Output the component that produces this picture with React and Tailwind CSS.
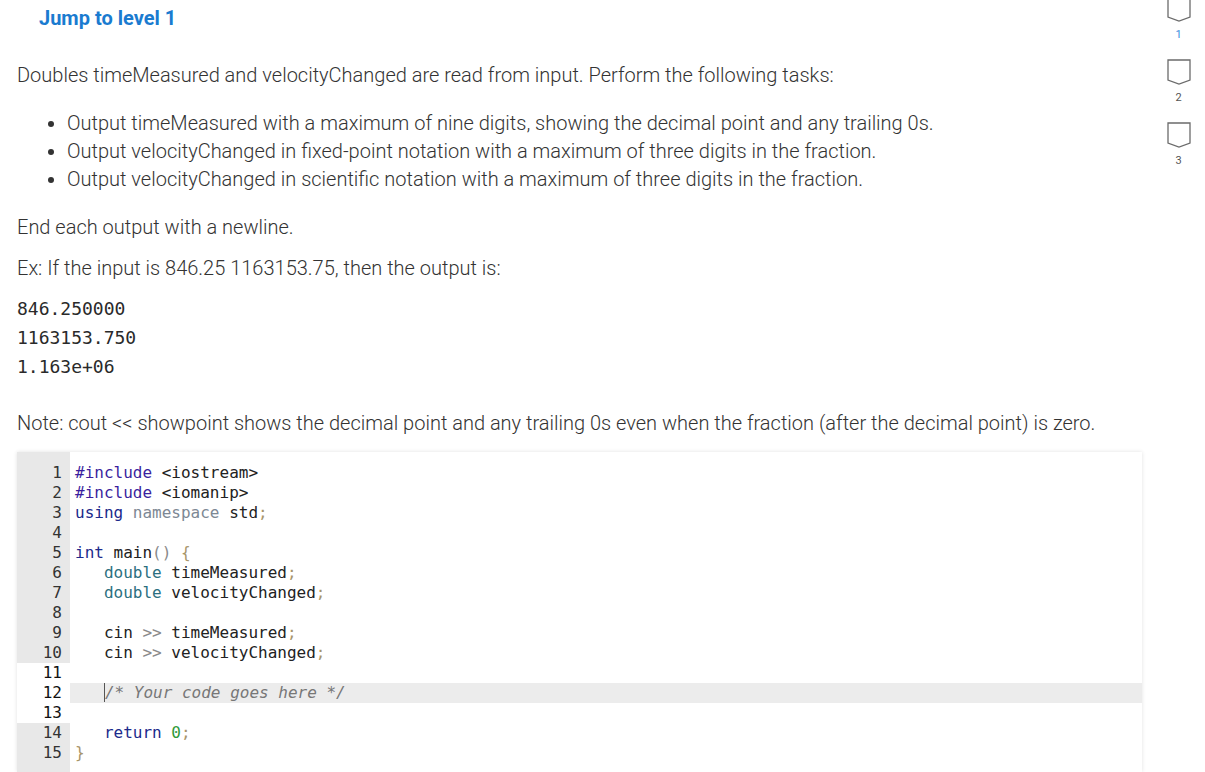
import React from 'react';

const mono = { fontFamily: '"DejaVu Sans Mono", "Liberation Mono", monospace' };

const C = {
  pre: 'text-[#3b1f9e]',
  kw: 'text-[#1c2a8c]',
  ns: 'text-[#7d8894]',
  type: 'text-[#2c6f80]',
  punc: 'text-[#a8956a]',
  op: 'text-[#8a8a8a]',
  num: 'text-[#2f9a3a]',
  txt: 'text-[#222]',
};

const codeLines = [
  [['#include', C.pre], [' <iostream>', C.txt]],
  [['#include', C.pre], [' <iomanip>', C.txt]],
  [['using', C.kw], [' namespace', C.ns], [' std', C.txt], [';', C.punc]],
  [],
  [['int', C.kw], [' main', C.txt], ['()', C.op], [' {', C.punc]],
  [['   double', C.type], [' timeMeasured', C.txt], [';', C.punc]],
  [['   double', C.type], [' velocityChanged', C.txt], [';', C.punc]],
  [],
  [['   cin', C.txt], [' >>', C.op], [' timeMeasured', C.txt], [';', C.punc]],
  [['   cin', C.txt], [' >>', C.op], [' velocityChanged', C.txt], [';', C.punc]],
  [],
  'comment',
  [],
  [['   return', C.kw], [' 0', C.num], [';', C.punc]],
  [['}', C.punc]],
];

const LevelIcon = ({ n, first }) => (
  <div className={`flex flex-col items-center ${first ? 'mt-[-4px]' : ''}`}>
    <svg width="26" height="26" viewBox="0 0 26 26">
      <path d="M2 1 L24 1 L24 21 L13 25 L2 21 Z" fill="white" stroke="#6b6b6b" strokeWidth="1.3" />
    </svg>
    <span className={`mt-[6px] text-[11px] leading-[14px] ${first ? 'text-[#3b8ee0]' : 'text-[#555]'}`}>{n}</span>
    <div className="h-[17px]" />
  </div>
);

export default function App() {
  return (
    <div className="w-[1205px] h-[772px] overflow-hidden bg-white flex" style={{ fontFamily: 'Roboto, "Liberation Sans", sans-serif' }}>
      <div className="w-[1142px] pl-[17px] flex flex-col">
        <h1 className="pl-[22px] pt-[6px] text-[20px] leading-[24px] font-bold text-[#1a7bd0]">Jump to level 1</h1>

        <div className="text-[20px] leading-[28px] font-light text-[#333]">
          <p className="mt-[31px]">Doubles timeMeasured and velocityChanged are read from input. Perform the following tasks:</p>
          <ul className="mt-[20px] pl-[50px] list-disc">
            <li>Output timeMeasured with a maximum of nine digits, showing the decimal point and any trailing 0s.</li>
            <li>Output velocityChanged in fixed-point notation with a maximum of three digits in the fraction.</li>
            <li>Output velocityChanged in scientific notation with a maximum of three digits in the fraction.</li>
          </ul>
          <p className="mt-[20px]">End each output with a newline.</p>
          <p className="mt-[13px]">Ex: If the input is 846.25 1163153.75, then the output is:</p>
          <div className="mt-[12px] text-[18px] leading-[29px] font-normal text-[#2a2a2a]" style={mono}>
            <div>846.250000</div>
            <div>1163153.750</div>
            <div>1.163e+06</div>
          </div>
          <p className="mt-[28px]">Note: cout &lt;&lt; showpoint shows the decimal point and any trailing 0s even when the fraction (after the decimal point) is zero.</p>
        </div>

        <div className="mt-[15px] flex-1 flex bg-white shadow-[0_0_4px_rgba(0,0,0,0.12)]" style={mono}>
          <div className="w-[53px] flex flex-col text-[16px] leading-[20px] text-[#333]">
            <div className="h-[11px] bg-[#e8e8e8]" />
            {codeLines.map((_, i) => (
              <div key={i} className={`pr-[8px] text-right ${i >= 10 && i <= 12 ? 'bg-white text-[#111]' : 'bg-[#e8e8e8]'}`}>{i + 1}</div>
            ))}
            <div className="flex-1 bg-[#e8e8e8]" />
          </div>
          <div className="flex-1 pt-[11px] text-[16px] leading-[20px] whitespace-pre">
            {codeLines.map((line, i) =>
              line === 'comment' ? (
                <div key={i} className="bg-[#ececec] pl-[5px]">
                  <span>   </span>
                  <span className="border-l border-[#555] italic text-[#777]">/* Your code goes here */</span>
                </div>
              ) : (
                <div key={i} className="pl-[5px] h-[20px]">
                  {line.map(([t, c], j) => (
                    <span key={j} className={c}>{t}</span>
                  ))}
                </div>
              )
            )}
          </div>
        </div>
      </div>

      <div className="flex-1 flex flex-col items-center pl-[10px]">
        <LevelIcon n={1} first />
        <LevelIcon n={2} />
        <LevelIcon n={3} />
      </div>
    </div>
  );
}
